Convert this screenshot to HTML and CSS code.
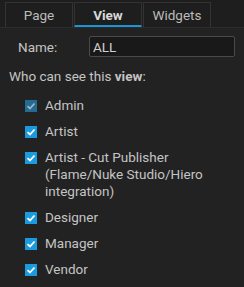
FILE: index.html
```html
<!DOCTYPE html>
<html lang="en">
<head>
    <meta charset="UTF-8">
    <title>View Settings</title>
    <link rel="stylesheet" href="styles.css">
</head>
<body>
    <div class="panel">
        <!-- Tabs -->
        <div class="tabs">
            <div class="tab">Page</div>
            <div class="tab active">View</div>
            <div class="tab">Widgets</div>
        </div>

        <!-- Name field -->
        <div class="name-row">
            <label for="viewName">Name:</label>
            <input type="text" id="viewName" value="ALL">
        </div>

        <p class="who">Who can see this <strong>view</strong>:</p>

        <ul class="roles">
            <li class="disabled"><span class="box"></span><span>Admin</span></li>
            <li><span class="box"></span><span>Artist</span></li>
            <li><span class="box"></span><span>Artist - Cut Publisher (Flame/Nuke Studio/Hiero integration)</span></li>
            <li><span class="box"></span><span>Designer</span></li>
            <li><span class="box"></span><span>Manager</span></li>
            <li><span class="box"></span><span>Vendor</span></li>
        </ul>
    </div>
</body>
</html>
```

FILE: styles.css
```css
body {
    margin: 0;
    background-color: #222222;
    font-family: Roboto, sans-serif;
    font-size: 13.5px;
    color: #c4c4c4;
}
.panel {
    width: 244px;
    height: 287px;
}
.tabs {
    display: flex;
    padding: 2px 0 0 5px;
    gap: 1px;
    background-color: #1e1e1e;
    border-bottom: 1px solid #2c2c2c;
}
.tab {
    width: 66px;
    height: 24px;
    line-height: 24px;
    text-align: center;
    border: 1px solid #333;
    border-bottom: none;
    background-color: #1e1e1e;
    color: #bbbbbb;
}
.tab.active {
    font-weight: bold;
    color: #d8d8d8;
    border-bottom: 2px solid #1a95d6;
    height: 22px;
}
.name-row {
    display: flex;
    align-items: center;
    padding: 8px 9px 0 18px;
}
.name-row label {
    flex: none;
    width: 71px;
}
.name-row input {
    flex: 1;
    min-width: 0;
    height: 21px;
    padding: 0 3px;
    margin: 0;
    box-sizing: border-box;
    background-color: #191919;
    border: 1px solid #4a4a4a;
    border-radius: 2px;
    color: #cfcfcf;
    font-family: Roboto, sans-serif;
    font-size: 13.5px;
}
.who {
    margin: 11px 0 0 9px;
    line-height: 17px;
}
.roles {
    list-style: none;
    margin: 12px 0 0 0;
    padding: 0 10px 0 25px;
}
.roles li {
    display: flex;
    align-items: flex-start;
    line-height: 17px;
    margin-bottom: 9px;
}
.box {
    flex: none;
    width: 12px;
    height: 12px;
    margin: 3px 8px 0 0;
    background-color: #1a9be0;
    background-image: url("data:image/svg+xml;utf8,<svg xmlns='http://www.w3.org/2000/svg' viewBox='0 0 12 12'><path d='M2.5 6.2 L5 8.5 L9.5 3.5' fill='none' stroke='white' stroke-width='1.8'/></svg>");
}
.disabled .box {
    background-color: #236b92;
    background-image: url("data:image/svg+xml;utf8,<svg xmlns='http://www.w3.org/2000/svg' viewBox='0 0 12 12'><path d='M2.5 6.2 L5 8.5 L9.5 3.5' fill='none' stroke='%23a0b4c0' stroke-width='1.8'/></svg>");
}
```
